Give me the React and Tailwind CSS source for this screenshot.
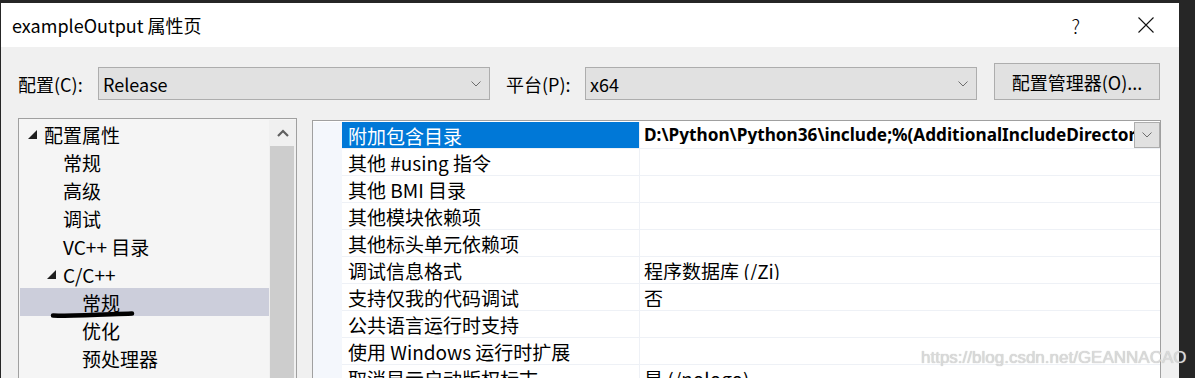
import React from 'react';

const tree = [
  { label: '配置属性', level: 0, caret: true },
  { label: '常规', level: 1 },
  { label: '高级', level: 1 },
  { label: '调试', level: 1 },
  { label: 'VC++ 目录', level: 1 },
  { label: 'C/C++', level: 1, caret: true },
  { label: '常规', level: 2, selected: true },
  { label: '优化', level: 2 },
  { label: '预处理器', level: 2 },
  { label: '代码生成', level: 2 },
];

const rows = [
  { name: '附加包含目录', value: 'D:\\Python\\Python36\\include;%(AdditionalIncludeDirectories)', selected: true },
  { name: '其他 #using 指令', value: '' },
  { name: '其他 BMI 目录', value: '' },
  { name: '其他模块依赖项', value: '' },
  { name: '其他标头单元依赖项', value: '' },
  { name: '调试信息格式', value: '程序数据库 (/Zi)' },
  { name: '支持仅我的代码调试', value: '否' },
  { name: '公共语言运行时支持', value: '' },
  { name: '使用 Windows 运行时扩展', value: '' },
  { name: '取消显示启动版权标志', value: '是 (/nologo)' },
];

function Chevron({ className = '' }) {
  return (
    <svg width="10" height="6" viewBox="0 0 10 6" className={className}>
      <polyline points="0.5,0.5 5,5 9.5,0.5" fill="none" stroke="#6d6d6d" strokeWidth="1" />
    </svg>
  );
}

function Dropdown({ value }) {
  return (
    <div className="w-[392px] h-[33px] self-end flex items-center justify-between bg-[#e1e1e1] border border-[#adadad] pl-[4px] pr-[8px]">
      <span>{value}</span>
      <Chevron />
    </div>
  );
}

function Caret() {
  return (
    <svg width="9" height="9" viewBox="0 0 9 9">
      <polygon points="9,0 9,9 0,9" fill="#1e1e1e" />
    </svg>
  );
}

export default function App() {
  return (
    <div className="relative w-[1195px] h-[378px] overflow-hidden bg-[#262626] font-['Noto_Sans_CJK_SC',sans-serif] text-black">
      <div className="ml-px mt-[3px] w-[1178px] h-[375px] flex flex-col">
        {/* Title bar */}
        <div className="h-[44px] bg-white flex items-center justify-between pl-[11px] shrink-0">
          <span className="text-[18px] leading-none">exampleOutput 属性页</span>
          <div className="flex items-center h-full">
            <span className="text-[19px] font-light leading-none mr-[58px]">?</span>
            <svg width="16" height="16" viewBox="0 0 16 16" className="mr-[25px]">
              <path d="M0.5,0.5 L15.5,15.5 M15.5,0.5 L0.5,15.5" stroke="#111" strokeWidth="1.1" />
            </svg>
          </div>
        </div>

        {/* Body */}
        <div className="flex-1 bg-[#f0f0f0] pl-[17px] pt-[16px]">
          <div className="flex h-[37px] text-[18px] leading-none">
            <div className="w-[80px] h-[33px] self-end flex items-center">配置(C):</div>
            <Dropdown value="Release" />
            <div className="w-[95px] h-[33px] self-end flex items-center pl-[16px]">平台(P):</div>
            <Dropdown value="x64" />
            <div className="ml-[17px] w-[166px] h-[37px] flex items-center justify-center bg-[#e1e1e1] border border-[#adadad]">
              配置管理器(O)...
            </div>
          </div>

          <div className="flex mt-[18px] text-[19px] leading-none">
            {/* Tree */}
            <div className="w-[279px] h-[300px] shrink-0 border border-[#a0a0a0] bg-[#f5f5f5] pt-px pl-px flex">
              <div className="w-[249px] flex flex-col">
                {tree.map((t, i) => (
                  <div
                    key={i}
                    className={`h-[28px] shrink-0 flex items-center ${t.selected ? 'bg-[#cccedb]' : ''}`}
                    style={{ paddingLeft: 5 + t.level * 19 }}
                  >
                    <div className="w-[19px] flex items-center pl-[3px]">{t.caret && <Caret />}</div>
                    <span>{t.label}</span>
                  </div>
                ))}
              </div>
              <div className="w-[27px] flex flex-col bg-[#f0f0f0] pl-px">
                <div className="h-[26px] flex items-center justify-center">
                  <svg width="12" height="8" viewBox="0 0 12 8">
                    <polyline points="1,7 6,2 11,7" fill="none" stroke="#606060" strokeWidth="2.2" />
                  </svg>
                </div>
                <div className="w-[24px] flex-1 bg-[#cdcdcd]" />
              </div>
            </div>

            {/* Property grid */}
            <div className="ml-[15px] mt-[2px] w-[849px] h-[300px] shrink-0 border border-[#a0a0a0] bg-white pt-px flex">
              <div className="w-[29px] shrink-0 bg-[#f4f7fc]" />
              <div className="flex-1 min-w-0 flex flex-col">
                {rows.map((r, i) => (
                  <div key={i} className="h-[27px] shrink-0 flex border-b border-[#eef1f6]">
                    <div
                      className={`w-[298px] shrink-0 flex items-center pl-[6px] border-r border-[#eef1f6] ${
                        r.selected ? 'bg-[#0078d7] text-white' : ''
                      }`}
                    >
                      {r.name}
                    </div>
                    <div className="flex-1 min-w-0 flex items-center">
                      <span
                        className={`flex-1 min-w-0 overflow-hidden whitespace-nowrap pl-[4px] ${
                          r.selected ? "font-['Noto_Sans',sans-serif] font-bold text-[17.2px]" : ''
                        }`}
                      >
                        {r.value}
                      </span>
                      {r.selected && (
                        <div className="w-[26px] h-full shrink-0 flex items-center justify-center bg-[#e1e1e1] border border-[#adadad]">
                          <Chevron />
                        </div>
                      )}
                    </div>
                  </div>
                ))}
              </div>
            </div>
          </div>
        </div>
      </div>

      {/* hand-drawn underline annotation */}
      <svg className="absolute left-[50px] top-[309px]" width="86" height="10" viewBox="0 0 86 10">
        <path d="M3,6.5 C25,7.5 55,5.5 82,4.5" fill="none" stroke="#000" strokeWidth="4.5" strokeLinecap="round" />
      </svg>

      {/* watermark */}
      <div className="absolute left-[921px] top-[349px] text-[17px] leading-none font-['Liberation_Sans',sans-serif] text-[#dadada] [text-shadow:0_0_1px_#b8b8b8]">
        https://blog.csdn.net/GEANNACAO
      </div>
    </div>
  );
}
